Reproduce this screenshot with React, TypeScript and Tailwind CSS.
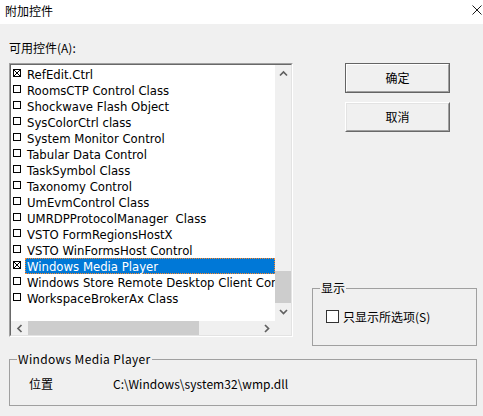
import React from "react";

const cjk = "font-['Noto_Sans_CJK_SC',sans-serif]";
const lst = "font-['DejaVu_Sans',sans-serif]";

const items: { t: string; c?: boolean; s?: boolean }[] = [
  { t: "RefEdit.Ctrl", c: true },
  { t: "RoomsCTP Control Class" },
  { t: "Shockwave Flash Object" },
  { t: "SysColorCtrl class" },
  { t: "System Monitor Control" },
  { t: "Tabular Data Control" },
  { t: "TaskSymbol Class" },
  { t: "Taxonomy Control" },
  { t: "UmEvmControl Class" },
  { t: "UMRDPProtocolManager  Class" },
  { t: "VSTO FormRegionsHostX" },
  { t: "VSTO WinFormsHost Control" },
  { t: "Windows Media Player", c: true, s: true },
  { t: "Windows Store Remote Desktop Client Control" },
  { t: "WorkspaceBrokerAx Class" },
];

function Box({ checked }: { checked?: boolean }) {
  return (
    <svg width="8" height="8" viewBox="0 0 8 8" className="block">
      <rect x="0.5" y="0.5" width="7" height="7" fill="white" stroke="#000" strokeWidth="1" />
      {checked && <path d="M1 1 L7 7 M7 1 L1 7" stroke="#000" strokeWidth="1" />}
    </svg>
  );
}

function Chevron({ dir }: { dir: "up" | "down" | "left" | "right" }) {
  const pts: Record<string, string> = {
    up: "1,5.5 4.5,2 8,5.5",
    down: "1,2 4.5,5.5 8,2",
    left: "5.5,1 2,4.5 5.5,8",
    right: "2,1 5.5,4.5 2,8",
  };
  const vertical = dir === "up" || dir === "down";
  return (
    <svg
      width={vertical ? 9 : 8}
      height={vertical ? 8 : 9}
      viewBox={vertical ? "0 0 9 8" : "0 0 8 9"}
      className="block"
    >
      <polyline points={pts[dir]} fill="none" stroke="#606060" strokeWidth="1.7" />
    </svg>
  );
}

export default function App() {
  return (
    <div className={`w-[483px] h-[416px] bg-[#f0f0f0] flex flex-col overflow-hidden text-black ${cjk}`}>
      {/* Title bar */}
      <div className="h-[24px] bg-white flex items-start justify-between pl-[5px] pr-[1px]">
        <span className="mt-[4px] text-[12px] leading-[14px]">附加控件</span>
        <svg width="10" height="10" viewBox="0 0 10 10" className="mt-[5px] block">
          <path d="M0.5 0.5 L9.5 9.5 M9.5 0.5 L0.5 9.5" stroke="#1a1a1a" strokeWidth="1" />
        </svg>
      </div>

      {/* Body */}
      <div className="flex pl-[9px]">
        {/* Left column */}
        <div className="flex flex-col w-[284px]">
          <div className="mt-[14px] h-[20px] leading-[20px] text-[12px]">可用控件(A):</div>
          <div className="mt-[5px] h-[274px] border border-t-[#a0a0a0] border-l-[#a0a0a0] border-r-white border-b-white">
            <div className="h-full border border-t-[#696969] border-l-[#696969] border-r-[#e3e3e3] border-b-[#e3e3e3] bg-white flex flex-col">
              <div className="flex h-[256px]">
                <div className={`w-[264px] overflow-hidden pt-[1px] ${lst} text-[11.7px]`}>
                  {items.map((it, i) => (
                    <div key={i} className="flex h-[16px] whitespace-pre">
                      <div className="w-[14px] shrink-0 pl-[2px] pt-[3px]">
                        <Box checked={it.c} />
                      </div>
                      {it.s ? (
                        <div className="flex-1 h-[16px] bg-[#0078d7] text-white border border-dotted border-[#ff8728] pl-[1px] pt-[1px] leading-[14px]">
                          {it.t}
                        </div>
                      ) : (
                        <div className="flex-1 h-[16px] pl-[2px] pt-[2px] leading-[14px] overflow-hidden">
                          {it.t}
                        </div>
                      )}
                    </div>
                  ))}
                </div>
                <div className="w-[16px] bg-[#f0f0f0] flex flex-col">
                  <div className="h-[17px] flex items-center justify-center">
                    <Chevron dir="up" />
                  </div>
                  <div className="flex-1" />
                  <div className="h-[32px] bg-[#cdcdcd]" />
                  <div className="h-[18px] flex items-center justify-center">
                    <Chevron dir="down" />
                  </div>
                </div>
              </div>
              <div className="flex h-[14px] bg-[#f0f0f0]">
                <div className="w-[17px] flex items-center justify-center">
                  <Chevron dir="left" />
                </div>
                <div className="w-[171px] bg-[#cdcdcd]" />
                <div className="flex-1" />
                <div className="w-[17px] flex items-center justify-center">
                  <Chevron dir="right" />
                </div>
                <div className="w-[16px]" />
              </div>
            </div>
          </div>
        </div>

        {/* Right column */}
        <div className="flex flex-col pl-[19px] pt-[39px]">
          <button className="ml-[33px] w-[105px] h-[30px] border border-[#646464] p-0 bg-[#f0f0f0]">
            <div className="w-full h-full border border-t-white border-l-white border-r-[#a0a0a0] border-b-[#a0a0a0] flex items-center justify-center text-[12px] leading-[14px]">
              确定
            </div>
          </button>
          <button className="ml-[33px] mt-[9px] w-[105px] h-[30px] border border-t-white border-l-white border-r-[#696969] border-b-[#696969] p-0 bg-[#f0f0f0]">
            <div className="w-full h-full border border-t-[#e3e3e3] border-l-[#e3e3e3] border-r-[#a0a0a0] border-b-[#a0a0a0] flex items-center justify-center text-[12px] leading-[14px]">
              取消
            </div>
          </button>
          <fieldset className="mt-[149px] w-[165px] border border-[#a0a0a0]">
            <legend className="ml-[7px] px-[1px] text-[12px] leading-[14px]">显示</legend>
            <div className="pt-[15px] pl-[13px] pb-[22px] flex items-center h-[50px]">
              <div className="flex items-center h-[13px]">
                <div className="w-[13px] h-[13px] border border-[#333333] bg-white shrink-0" />
                <span className="ml-[4px] text-[12px] leading-[14px] whitespace-nowrap">只显示所选项(S)</span>
              </div>
            </div>
          </fieldset>
        </div>
      </div>

      {/* Bottom group */}
      <fieldset className="mt-[6px] ml-[9px] w-[468px] border border-[#a0a0a0]">
        <legend className="ml-[7px] px-[1px] text-[12px] leading-[14px] tracking-[0.35px]">Windows Media Player</legend>
        <div className="pt-[8px] pb-[11px] pl-[19px] flex text-[12px] leading-[20px]">
          <span className="w-[84px]">位置</span>
          <span className="tracking-[0.05px]">C:\Windows\system32\wmp.dll</span>
        </div>
      </fieldset>
    </div>
  );
}
